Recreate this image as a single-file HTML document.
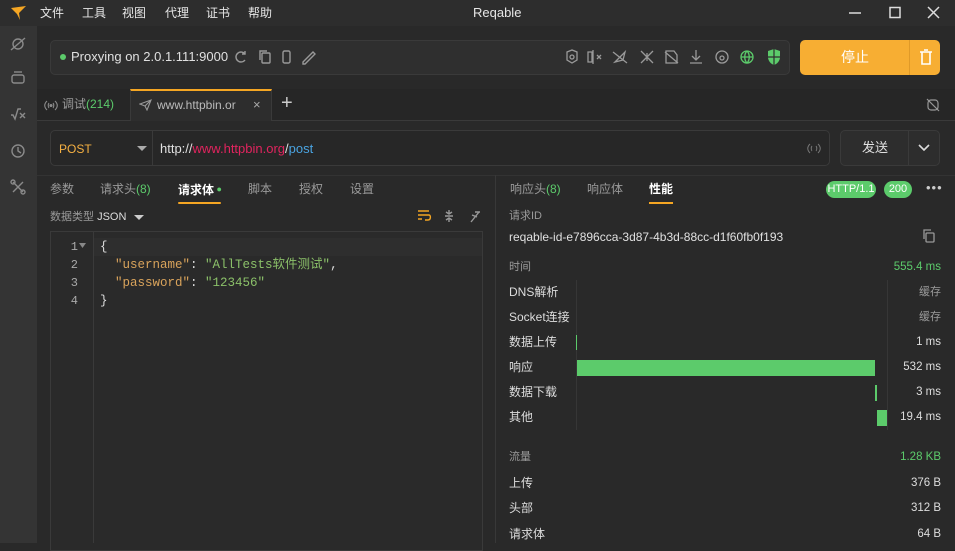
<!DOCTYPE html>
<html><head><meta charset="utf-8"><style>
*{box-sizing:border-box;margin:0;padding:0}
body{width:955px;height:543px;overflow:hidden;background:#292929;font-family:"Liberation Sans","Noto Sans CJK SC",sans-serif;color:#ddd;position:relative;font-size:12px}
.a{position:absolute}
.t{position:absolute;white-space:nowrap;line-height:16px}
.g{color:#5ccb6b}
.mut{color:#9a9a9a}
svg{position:absolute}
</style></head><body>
<div class="a" style="left:0;top:0;width:955px;height:26px;background:#2d2d2d"></div>
<svg style="left:10px;top:5px" width="17" height="16" viewBox="0 0 17 16"><path d="M1 3 L16 1 L9 8 L10 15 L7 9 Z" fill="#f5a623"/></svg>
<div class="t" style="left:40px;top:5px;color:#e6e6e6">文件</div>
<div class="t" style="left:82px;top:5px;color:#e6e6e6">工具</div>
<div class="t" style="left:122px;top:5px;color:#e6e6e6">视图</div>
<div class="t" style="left:165px;top:5px;color:#e6e6e6">代理</div>
<div class="t" style="left:206px;top:5px;color:#e6e6e6">证书</div>
<div class="t" style="left:248px;top:5px;color:#e6e6e6">帮助</div>
<div class="t" style="left:473px;top:5px;font-size:13px;color:#e6e6e6">Reqable</div>
<svg style="left:848px;top:6px" width="100" height="14"><path d="M1 7 H13" stroke="#ddd" stroke-width="1.5"/><rect x="42" y="1.5" width="10" height="10" fill="none" stroke="#ddd" stroke-width="1.5"/><path d="M80 1 L91 12 M91 1 L80 12" stroke="#ddd" stroke-width="1.5"/></svg>
<div class="a" style="left:0;top:26px;width:37px;height:517px;background:#343434"></div>
<svg style="left:9px;top:35px" width="20" height="170" viewBox="0 0 20 170" fill="none" stroke="#8a8a8a" stroke-width="1.4">
<circle cx="9" cy="9" r="5"/><path d="M2 15 L16 3"/>
<rect x="3" y="40" width="12" height="8" rx="2"/><path d="M5 37 H13"/>
<path d="M2 80 L4 80 L6 84 L9 74 H12 M11 78 L16 83 M16 78 L11 83"/>
<circle cx="9" cy="116" r="6"/><path d="M9 112 V116 L12 118"/>
<path d="M4 147 L14 157 M14 147 L4 157"/><circle cx="4" cy="147" r="2"/><circle cx="14" cy="157" r="2"/>
</svg>
<div class="a" style="left:50px;top:40px;width:740px;height:35px;background:#2f2f2f;border:1px solid #3a3a3a;border-radius:5px"></div>
<div class="a" style="left:60px;top:54px;width:6px;height:6px;border-radius:50%;background:#5ccb6b"></div>
<div class="t" style="left:71px;top:49px;font-size:13px;color:#e0e0e0">Proxying on 2.0.1.111:9000</div>
<svg style="left:233px;top:49px" width="85" height="16" fill="none" stroke="#999" stroke-width="1.4">
<path d="M12 5 A5 5 0 1 0 12 11"/><path d="M12 2 V5 H9"/>
<rect x="29" y="4" width="8" height="10" rx="1"/><path d="M27 11 V2 H34"/>
<rect x="50" y="2" width="7" height="12" rx="1.5"/>
<path d="M70 13 L80 3 L82 5 L72 15 H70 Z"/>
</svg>
<svg style="left:563px;top:48px" width="222" height="18" fill="none" stroke="#9a9a9a" stroke-width="1.3">
<path d="M4 4 L9 2 L14 4 V12 L9 15 L4 12 Z"/><circle cx="9" cy="9" r="2"/>
<path d="M30 2 V16 M25 4 H29 V14 H25 Z M34 7 L38 11 M38 7 L34 11"/>
<path d="M50 4 L64 15 M52 14 L62 4 L60 12 Z"/>
<path d="M78 3 L90 15 M90 3 L78 15 M84 5 V13"/>
<path d="M103 3 H111 L114 7 V15 H103 Z M102 4 L115 15"/>
<path d="M133 2 V11 M129 8 L133 12 L137 8 M127 15 H139"/>
<circle cx="159" cy="9" r="6"/><circle cx="159" cy="10" r="2"/>
<circle cx="184" cy="9" r="6" stroke="#5ccb6b"/><path d="M178 9 H190 M184 3 C181 6 181 12 184 15 C187 12 187 6 184 3" stroke="#5ccb6b"/>
</svg>
<svg style="left:766px;top:48px" width="16" height="18"><path d="M2 3 L8 1 L14 3 V9 C14 13 11 16 8 17 C5 16 2 13 2 9 Z" fill="#5ccb6b"/><path d="M8 1 V17 M2 9 H14" stroke="#2f2f2f" stroke-width="1.2"/></svg>
<div class="a" style="left:800px;top:40px;width:140px;height:35px;background:#f7ae33;border-radius:5px"></div>
<div class="a" style="left:909px;top:40px;width:1px;height:35px;background:#e09a28"></div>
<div class="t" style="left:841px;top:49px;font-size:14px;color:#fff">停止</div>
<svg style="left:919px;top:49px" width="14" height="17" fill="none" stroke="#fff" stroke-width="1.6"><path d="M1 3 H13 M5 1 H9 M3 3 V15 H11 V3"/></svg>
<div class="a" style="left:37px;top:89px;width:918px;height:32px;background:#262626"></div>
<div class="a" style="left:37px;top:120px;width:918px;height:1px;background:#3a3a3a"></div>
<svg style="left:44px;top:99px" width="14" height="12" fill="none" stroke="#8a8a8a" stroke-width="1.1"><path d="M3 2 C0 5 0 8 3 11 M11 2 C14 5 14 8 11 11 M5 4 C4 5 4 8 5 9 M9 4 C10 5 10 8 9 9"/><circle cx="7" cy="6.5" r="1" fill="#8a8a8a"/></svg>
<div class="t mut" style="left:62px;top:96px">调试<span class="g">(214)</span></div>
<div class="a" style="left:130px;top:89px;width:142px;height:32px;background:#2d2d2d;border-top:2px solid #f5a623;border-left:1px solid #3a3a3a;border-right:1px solid #3a3a3a"></div>
<svg style="left:139px;top:99px" width="13" height="12" fill="none" stroke="#999" stroke-width="1.1"><path d="M1 5 L12 1 L8 11 L6 7 Z M6 7 L12 1"/></svg>
<div class="t" style="left:157px;top:97px;color:#bbb">www.httpbin.or</div>
<div class="t" style="left:253px;top:97px;font-size:13px;color:#aaa">×</div>
<div class="t" style="left:281px;top:95px;font-size:20px;color:#ccc;font-weight:300">+</div>
<svg style="left:926px;top:98px" width="14" height="14" fill="none" stroke="#999" stroke-width="1.2"><rect x="2" y="2" width="10" height="10" rx="3"/><path d="M1 1 L13 13"/></svg>
<div class="a" style="left:50px;top:130px;width:780px;height:36px;border:1px solid #3a3a3a;border-radius:5px;background:#272727"></div>
<div class="a" style="left:152px;top:131px;width:1px;height:34px;background:#3a3a3a"></div>
<div class="t" style="left:59px;top:141px;color:#f5b042">POST</div>
<svg style="left:137px;top:146px" width="10" height="6"><path d="M0 0 H10 L5 5 Z" fill="#aaa"/></svg>
<div class="t" style="left:160px;top:141px;font-size:13px;color:#e0e0e0">http://<span style="color:#e0245e">www.httpbin.org</span>/<span style="color:#4aa3e0">post</span></div>
<svg style="left:807px;top:143px" width="14" height="11" fill="none" stroke="#777" stroke-width="1"><path d="M3 1 C0 4 0 7 3 10 M11 1 C14 4 14 7 11 10 M5 3 C4 4 4 7 5 8 M9 3 C10 4 10 7 9 8"/></svg>
<div class="a" style="left:840px;top:130px;width:100px;height:36px;border:1px solid #3a3a3a;border-radius:5px;background:#2d2d2d"></div>
<div class="a" style="left:908px;top:131px;width:1px;height:34px;background:#3a3a3a"></div>
<div class="t" style="left:862px;top:140px;font-size:13px;color:#e0e0e0">发送</div>
<svg style="left:918px;top:144px" width="12" height="8" fill="none" stroke="#ddd" stroke-width="1.6"><path d="M1 1 L6 6 L11 1"/></svg>
<div class="a" style="left:37px;top:175px;width:918px;height:1px;background:#333"></div>
<div class="a" style="left:495px;top:175px;width:1px;height:368px;background:#383838"></div>
<div class="t mut" style="left:50px;top:181px">参数</div>
<div class="t mut" style="left:100px;top:181px">请求头<span class="g">(8)</span></div>
<div class="t" style="left:178px;top:181px;color:#fff;font-weight:bold">请求体<span class="g" style="font-size:9px;vertical-align:2px"> ●</span></div>
<div class="a" style="left:178px;top:202px;width:43px;height:2px;background:#f5a623;border-radius:1px"></div>
<div class="t mut" style="left:248px;top:181px">脚本</div>
<div class="t mut" style="left:299px;top:181px">授权</div>
<div class="t mut" style="left:350px;top:181px">设置</div>
<div class="t" style="left:50px;top:209px;font-size:11px"><span class="mut">数据类型</span> <span style="color:#ddd">JSON</span></div>
<svg style="left:134px;top:215px" width="10" height="6"><path d="M0 0 H10 L5 5 Z" fill="#ccc"/></svg>
<svg style="left:417px;top:209px" width="65" height="14" fill="none" stroke-width="1.4"><path d="M1 2 H12 M1 6 H12 C14 6 14 11 11 11 H8 M1 10 H5" stroke="#f5a623"/><path d="M32 1 V5 M29 3 L32 5 L35 3 M28 7 H36 M32 13 V9 M29 11 L32 9 L35 11" stroke="#999"/><path d="M54 13 L62 3 M58 3 H63 M55 6 L60 8" stroke="#999"/></svg>
<div class="a" style="left:50px;top:231px;width:433px;height:320px;border:1px solid #3a3a3a;background:#2a2a2a"></div>
<div class="a" style="left:93px;top:232px;width:1px;height:311px;background:#3a3a3a"></div>
<div class="a" style="left:94px;top:238px;width:388px;height:18px;background:#2e2e2e"></div>
<div style="position:absolute;left:60px;top:238px;font-family:'Liberation Mono','Noto Sans CJK SC',monospace;font-size:12px;line-height:18px;color:#aaa;width:18px;text-align:right">1<br>2<br>3<br>4</div>
<svg style="left:79px;top:243px" width="7" height="5"><path d="M0 0 H7 L3.5 5 Z" fill="#888"/></svg>
<div style="position:absolute;left:100px;top:238px;font-family:'Liberation Mono','Noto Sans CJK SC',monospace;font-size:12.5px;line-height:18px;color:#ddd;white-space:pre">{
  <span style="color:#d9a35b">"username"</span>: <span style="color:#8bc069">"AllTests软件测试"</span>,
  <span style="color:#d9a35b">"password"</span>: <span style="color:#8bc069">"123456"</span>
}</div>
<div class="t mut" style="left:510px;top:181px">响应头<span class="g">(8)</span></div>
<div class="t mut" style="left:587px;top:181px">响应体</div>
<div class="t" style="left:649px;top:181px;color:#fff;font-weight:bold">性能</div>
<div class="a" style="left:649px;top:202px;width:24px;height:2px;background:#f5a623"></div>
<div class="a" style="left:826px;top:181px;width:50px;height:17px;border-radius:9px;background:#5ccb6b;color:#fff;font-size:11px;text-align:center;line-height:17px">HTTP/1.1</div>
<div class="a" style="left:884px;top:181px;width:28px;height:17px;border-radius:9px;background:#5ccb6b;color:#fff;font-size:11px;text-align:center;line-height:17px">200</div>
<div class="t" style="left:926px;top:180px;color:#ccc;font-size:13px;letter-spacing:1px">•••</div>
<div class="t mut" style="left:509px;top:208px;font-size:11px">请求ID</div>
<div class="t" style="left:509px;top:229px;color:#e0e0e0">reqable-id-e7896cca-3d87-4b3d-88cc-d1f60fb0f193</div>
<svg style="left:922px;top:229px" width="13" height="14" fill="none" stroke="#999" stroke-width="1.3"><rect x="4" y="4" width="8" height="9" rx="1"/><path d="M2 10 V1 H9"/></svg>
<div class="t mut" style="left:509px;top:259px;font-size:11px">时间</div>
<div class="t g" style="right:14px;top:259px;font-size:11.5px">555.4 ms</div>
<div class="a" style="left:576px;top:280px;width:1px;height:150px;background:#363636"></div>
<div class="a" style="left:887px;top:280px;width:1px;height:150px;background:#363636"></div>
<div class="t" style="left:509px;top:284px">DNS解析</div><div class="t mut" style="right:14px;top:284px;font-size:11px">缓存</div>
<div class="t" style="left:509px;top:309px">Socket连接</div><div class="t mut" style="right:14px;top:309px;font-size:11px">缓存</div>
<div class="t" style="left:509px;top:334px">数据上传</div><div class="t" style="right:14px;top:334px;font-size:11.5px">1 ms</div>
<div class="a" style="left:576px;top:335px;width:1px;height:15px;background:#5ccb6b"></div>
<div class="t" style="left:509px;top:359px">响应</div><div class="t" style="right:14px;top:359px;font-size:11.5px">532 ms</div>
<div class="a" style="left:577px;top:360px;width:298px;height:16px;background:#5ccb6b"></div>
<div class="t" style="left:509px;top:384px">数据下载</div><div class="t" style="right:14px;top:384px;font-size:11.5px">3 ms</div>
<div class="a" style="left:875px;top:385px;width:2px;height:16px;background:#5ccb6b"></div>
<div class="t" style="left:509px;top:409px">其他</div><div class="t" style="right:14px;top:409px;font-size:11.5px">19.4 ms</div>
<div class="a" style="left:877px;top:410px;width:10px;height:16px;background:#5ccb6b"></div>
<div class="t mut" style="left:509px;top:449px;font-size:11px">流量</div>
<div class="t g" style="right:14px;top:449px;font-size:11.5px">1.28 KB</div>
<div class="t" style="left:509px;top:475px">上传</div><div class="t" style="right:14px;top:475px;font-size:11.5px">376 B</div>
<div class="t" style="left:509px;top:500px">头部</div><div class="t" style="right:14px;top:500px;font-size:11.5px">312 B</div>
<div class="t" style="left:509px;top:526px">请求体</div><div class="t" style="right:14px;top:526px;font-size:11.5px">64 B</div>
</body></html>
